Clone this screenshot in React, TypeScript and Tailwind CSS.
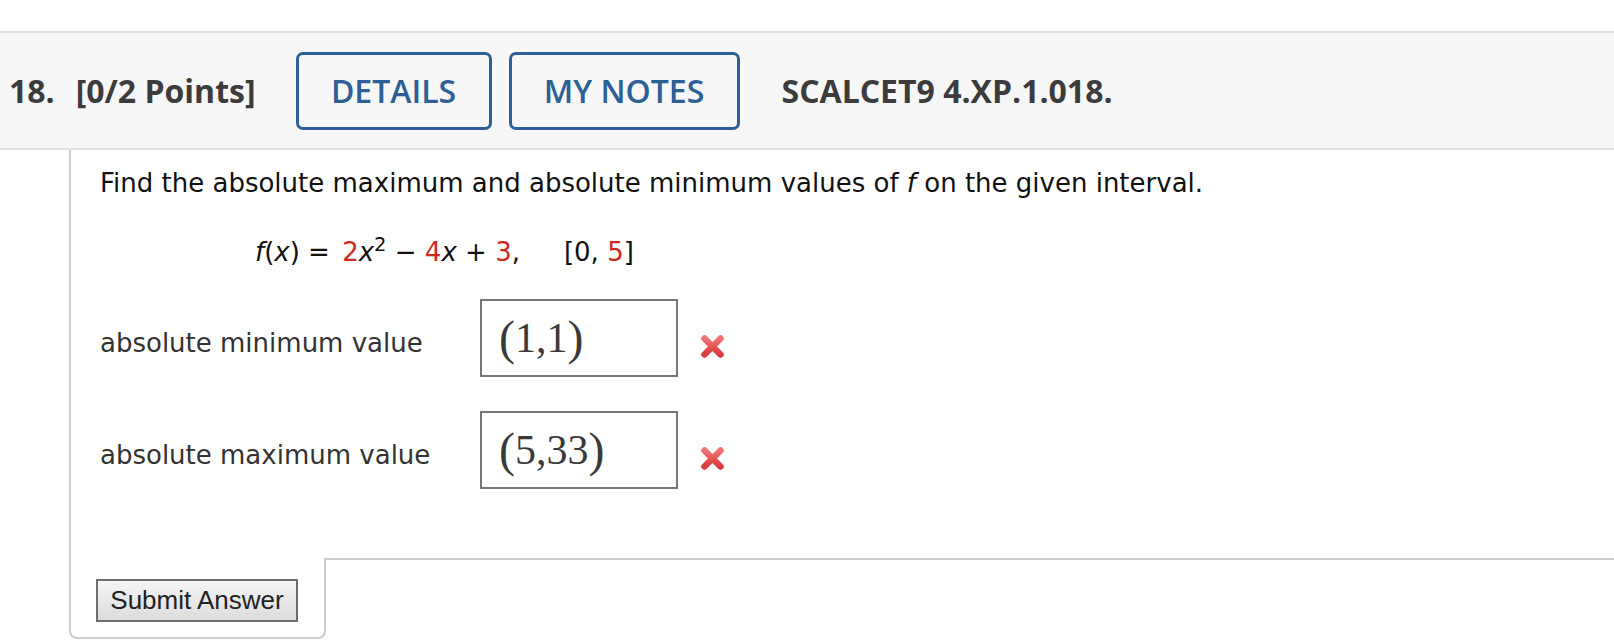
import React from "react";

function RedX() {
  return (
    <svg width="27" height="27" viewBox="0 0 27 27" className="block">
      <defs>
        <linearGradient id="xg" x1="0" y1="0" x2="0" y2="1">
          <stop offset="0" stopColor="#f07474" />
          <stop offset="1" stopColor="#d83c3c" />
        </linearGradient>
      </defs>
      <path d="M5.5 5.5 L21.5 21.5 M21.5 5.5 L5.5 21.5" stroke="url(#xg)" strokeWidth="6.5" strokeLinecap="round" fill="none" />
    </svg>
  );
}

function AnswerRow({ label, a, b }: { label: string; a: string; b: string }) {
  return (
    <div className="flex items-start">
      <div className="w-[380px] mt-[28px] text-[26px] leading-[32px] text-[#333]">{label}</div>
      <div className="w-[198px] h-[78px] border-2 border-[#777] bg-white flex items-center pl-[17px] text-[#3a3a3a] font-['Liberation_Serif',serif]">
        <span className="text-[48px] leading-none">(</span>
        <span className="text-[42px] leading-none">{a},{b}</span>
        <span className="text-[48px] leading-none">)</span>
      </div>
      <div className="ml-[21px] mt-[34px]">
        <RedX />
      </div>
    </div>
  );
}

export default function App() {
  const red = "text-[#cc2a1e]";
  return (
    <div className="w-[1614px] h-[642px] bg-white overflow-hidden font-['DejaVu_Sans',Verdana,sans-serif]">
      <div className="mt-[31px] h-[119px] border-y-2 border-[#e0e0e0] bg-[#f7f7f7] flex items-center pl-[9px] font-['Open_Sans',sans-serif] text-[#3c3c3c]">
        <span className="text-[32px] font-bold">18.</span>
        <span className="ml-[21px] text-[32px] font-bold">[0/2 Points]</span>
        <div className="ml-[40px] w-[196px] h-[78px] border-[3px] border-[#2c6096] rounded-[7px] flex items-center justify-center text-[32px] font-semibold text-[#2c6096]">
          DETAILS
        </div>
        <div className="ml-[17px] w-[231px] h-[78px] border-[3px] border-[#2c6096] rounded-[7px] flex items-center justify-center text-[32px] font-semibold text-[#2c6096]">
          MY NOTES
        </div>
        <span className="ml-[42px] text-[32px] font-bold">SCALCET9 4.XP.1.018.</span>
      </div>

      <div className="ml-[69px] h-[408px] border-l-2 border-[#cccccc] pl-[29px] pt-[17px]">
        <div className="text-[26px] leading-[32px] text-[#111]">
          Find the absolute maximum and absolute minimum values of <i>f</i> on the given interval.
        </div>
        <div className="mt-[37px] ml-[155px] text-[26px] leading-[32px] text-[#111] whitespace-nowrap">
          <i>f</i>(<i>x</i>) = <span className={`${red} ml-[4px]`}>2</span>
          <i>x</i>
          <sup>2</sup> − <span className={red}>4</span>
          <i>x</i> + <span className={red}>3</span>,
          <span className="ml-[44px]">[0, </span>
          <span className={red}>5</span>]
        </div>
        <div className="mt-[31px]">
          <AnswerRow label="absolute minimum value" a="1" b="1" />
        </div>
        <div className="mt-[34px]">
          <AnswerRow label="absolute maximum value" a="5" b="33" />
        </div>
      </div>

      <div className="flex">
        <div className="ml-[69px] w-[257px] h-[81px] border-x-2 border-b-2 border-[#cccccc] rounded-b-[8px] pl-[25px] pt-[21px]">
          <div className="w-[202px] h-[43px] border-2 border-[#6e6e6e] bg-gradient-to-b from-[#f5f5f5] to-[#dcdcdc] flex items-center justify-center text-[26px] text-[#222] font-['Liberation_Sans',Arial,sans-serif]">
            Submit Answer
          </div>
        </div>
        <div className="flex-1 border-t-2 border-[#cccccc]" />
      </div>
    </div>
  );
}
